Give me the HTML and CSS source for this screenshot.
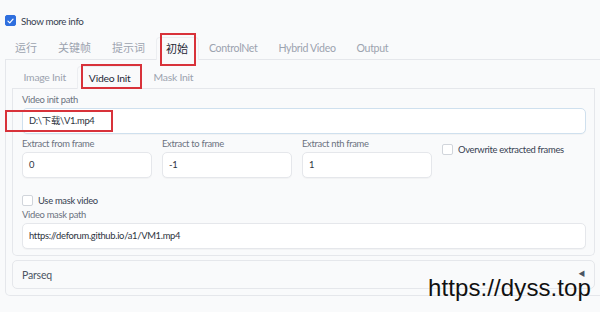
FILE: index.html
```html
<!DOCTYPE html>
<html lang="zh">
<head>
<meta charset="utf-8">
<link rel="stylesheet" href="styles.css">
</head>
<body>
<div class="page">
  <label class="check-row top-check">
    <span class="cb checked"><svg viewBox="0 0 12 12" width="10" height="10"><path d="M2.6 6.2 L5 8.5 L9.4 3.6" fill="none" stroke="#fff" stroke-width="1.6" stroke-linecap="round" stroke-linejoin="round"/></svg></span>
    <span>Show more info</span>
  </label>

  <div class="tabs">
    <span class="tab zh">运行</span>
    <span class="tab zh">关键帧</span>
    <span class="tab zh">提示词</span>
    <span class="tab zh selected">初始</span>
    <span class="tab">ControlNet</span>
    <span class="tab">Hybrid Video</span>
    <span class="tab">Output</span>
  </div>

  <div class="panel">
    <div class="subtabs">
      <span class="subtab">Image Init</span>
      <span class="subtab selected">Video Init</span>
      <span class="subtab">Mask Init</span>
    </div>
    <div class="box">
      <div class="field">
        <div class="label">Video init path</div>
        <div class="input">D:\下载\V1.mp4</div>
      </div>
      <div class="row">
        <div class="field">
          <div class="label">Extract from frame</div>
          <div class="input">0</div>
        </div>
        <div class="field">
          <div class="label">Extract to frame</div>
          <div class="input">-1</div>
        </div>
        <div class="field">
          <div class="label">Extract nth frame</div>
          <div class="input">1</div>
        </div>
        <label class="check-row overwrite">
          <span class="cb"></span>
          <span>Overwrite extracted frames</span>
        </label>
      </div>
      <label class="check-row mask-check">
        <span class="cb"></span>
        <span>Use mask video</span>
      </label>
      <div class="field">
        <div class="label">Video mask path</div>
        <div class="input">https://deforum.github.io/a1/VM1.mp4</div>
      </div>
    </div>
    <div class="parseq">
      <span>Parseq</span>
      <span class="caret">◀</span>
    </div>
  </div>

  <div class="mark mark-tab"></div>
  <div class="mark mark-subtab"></div>
  <div class="mark mark-input"></div>
  <div class="watermark">https://dyss.top</div>
</div>
</body>
</html>
```

FILE: styles.css
```css
html, body {
  margin: 0;
  padding: 0;
  background: #f9fafb;
}
body {
  font-family: Lato, "Noto Sans CJK SC", sans-serif;
  color: #374151;
  overflow: hidden;
  letter-spacing: -0.3px;
}
.page {
  position: relative;
  width: 600px;
  height: 312px;
  padding: 15px 0 0 5px;
  box-sizing: border-box;
}
.check-row {
  display: flex;
  align-items: center;
  gap: 5px;
  font-size: 9.4px;
  color: #374151;
}
.cb {
  width: 9px;
  height: 9px;
  border: 1px solid #d1d5db;
  border-radius: 2px;
  background: #fff;
  display: flex;
  align-items: center;
  justify-content: center;
  flex: none;
}
.cb.checked {
  background: #2f6fde;
  border-color: #2f6fde;
}
.top-check {
  height: 11px;
  font-size: 9.8px;
  letter-spacing: -0.35px;
}
.tabs {
  display: flex;
  margin-top: 11px;
  margin-right: -5px;
  height: 22px;
  border-bottom: 1px solid #e5e7eb;
  font-size: 10.6px;
  letter-spacing: -0.35px;
}
.tab {
  padding: 0 10.5px;
  color: #9ca3af;
  line-height: 22px;
}
.tab.zh {
  font-size: 11px;
  letter-spacing: 0;
  padding: 0 10.5px;
}
.tab.zh:first-child {
  padding-left: 10px;
}
.tab.selected {
  color: #1f2937;
  background: #f9fafb;
  margin-bottom: -1px;
  border: 1px solid #eceef1;
  border-bottom: none;
  border-radius: 4px 4px 0 0;
  padding: 0 9.5px;
}
.panel {
  border-left: 1px solid #e5e7eb;
  border-bottom: 1px solid #e5e7eb;
  border-right: 1px solid #e5e7eb;
  margin-right: -3px;
  padding: 6px 7px 6px 6px;
  border-radius: 0 0 0 5px;
}
.subtabs {
  display: flex;
  height: 22px;
  border-bottom: 1px solid #e5e7eb;
  font-size: 10.4px;
  letter-spacing: -0.25px;
}
.subtab {
  padding: 0 11.5px;
  line-height: 22px;
  color: #9ca3af;
}
.subtab.selected {
  color: #1f2937;
  border: 1px solid #eceef1;
  border-bottom: none;
  border-radius: 4px 4px 0 0;
  background: #f9fafb;
  margin-bottom: -1px;
  padding: 0 10.5px;
}
.box {
  border: 1px solid #e5e7eb;
  border-top: none;
  border-radius: 0 0 5px 5px;
  padding: 5px 8px 6px 9px;
  display: flex;
  flex-direction: column;
}
.field {
  display: flex;
  flex-direction: column;
}
.label {
  font-size: 9.4px;
  line-height: 12px;
  color: #6b7280;
  margin-bottom: 2px;
}
.input {
  height: 24px;
  border: 1px solid #e5e7eb;
  border-radius: 5px;
  background: #fff;
  padding: 0 6px;
  font-size: 9.4px;
  line-height: 24px;
  color: #2d3440;
  box-shadow: 0 1px 1px rgba(0,0,0,0.03);
}
.box > .field:first-child .input {
  border-color: #cfe0ee;
}
.row {
  display: grid;
  grid-template-columns: 130px 130px 130px 1fr;
  column-gap: 10px;
  margin-top: 4px;
}
.overwrite {
  align-self: start;
  margin-top: 6px;
  gap: 5px;
}
.mask-check {
  margin-top: 16px;
  height: 12px;
}
.mask-check + .field {
  margin-top: 3px;
}
.parseq {
  margin-top: 4px;
  height: 27px;
  border: 1px solid #e5e7eb;
  border-radius: 5px;
  display: flex;
  align-items: center;
  justify-content: space-between;
  padding: 0 9px 0 9px;
  font-size: 10.5px;
  letter-spacing: -0.2px;
  color: #4b5563;
}
.caret {
  font-size: 7px;
  color: #4b5563;
  margin-top: -3px;
}
.mark {
  position: absolute;
  border: 2px solid #d8323a;
  box-sizing: border-box;
}
.mark-tab {
  left: 160px;
  top: 33px;
  width: 36px;
  height: 33px;
}
.mark-subtab {
  left: 81px;
  top: 64px;
  width: 61px;
  height: 25px;
}
.mark-input {
  left: 5px;
  top: 110px;
  width: 108px;
  height: 22px;
}
.watermark {
  position: absolute;
  left: 428px;
  top: 274px;
  font-family: "Liberation Sans", sans-serif;
  font-size: 24px;
  color: #111;
  letter-spacing: 0.1px;
  text-shadow: 0 0 1px #fff;
}
```
